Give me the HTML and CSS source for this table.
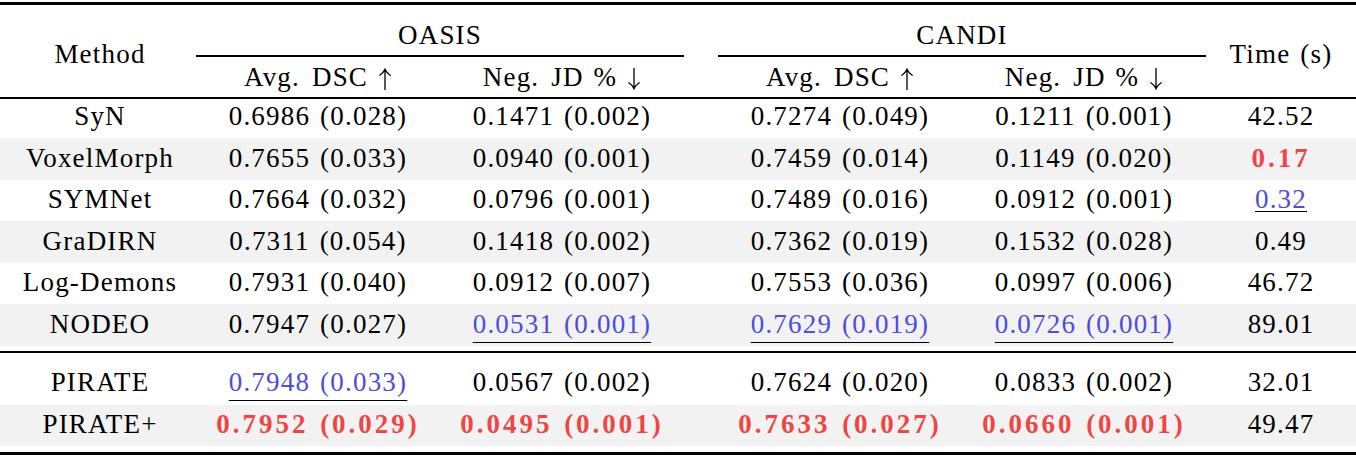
FILE: index.html
```html
<!DOCTYPE html>
<html lang="en">
<head>
<meta charset="utf-8">
<title>Registration results</title>
<link rel="stylesheet" href="styles.css">
</head>
<body>
<table class="results">
  <colgroup>
    <col class="c-method">
    <col class="c-metric">
    <col class="c-metric">
    <col class="c-gap">
    <col class="c-metric">
    <col class="c-metric">
    <col class="c-time">
  </colgroup>
  <thead>
    <tr class="h1">
      <th rowspan="2" class="side method">Method</th>
      <th colspan="2" class="group">OASIS</th>
      <th class="gap-top"></th>
      <th colspan="2" class="group">CANDI</th>
      <th rowspan="2" class="side">Time (s)</th>
    </tr>
    <tr class="h2">
      <th><span class="abbr">Avg.</span> DSC <svg class="arrow" viewBox="0 0 14 22" width="14" height="22" aria-label="↑"><path d="M7 1.2V22M1.8 7.2C4 5.8 5.8 4 7 1.2C8.2 4 10 5.8 12.2 7.2"/></svg></th>
      <th><span class="abbr">Neg.</span> JD % <svg class="arrow" viewBox="0 0 14 22" width="14" height="22" aria-label="↓"><path d="M7 0V20.8M1.8 14.8C4 16.2 5.8 18 7 20.8C8.2 18 10 16.2 12.2 14.8"/></svg></th>
      <th></th>
      <th><span class="abbr">Avg.</span> DSC <svg class="arrow" viewBox="0 0 14 22" width="14" height="22" aria-label="↑"><path d="M7 1.2V22M1.8 7.2C4 5.8 5.8 4 7 1.2C8.2 4 10 5.8 12.2 7.2"/></svg></th>
      <th><span class="abbr">Neg.</span> JD % <svg class="arrow" viewBox="0 0 14 22" width="14" height="22" aria-label="↓"><path d="M7 0V20.8M1.8 14.8C4 16.2 5.8 18 7 20.8C8.2 18 10 16.2 12.2 14.8"/></svg></th>
    </tr>
  </thead>
  <tbody>
    <tr class="first">
      <td class="method">SyN</td>
      <td>0.6986 (0.028)</td>
      <td>0.1471 (0.002)</td>
      <td></td>
      <td>0.7274 (0.049)</td>
      <td>0.1211 (0.001)</td>
      <td>42.52</td>
    </tr>
    <tr class="shade">
      <td class="method">VoxelMorph</td>
      <td>0.7655 (0.033)</td>
      <td>0.0940 (0.001)</td>
      <td></td>
      <td>0.7459 (0.014)</td>
      <td>0.1149 (0.020)</td>
      <td><span class="best">0.17</span></td>
    </tr>
    <tr>
      <td class="method">SYMNet</td>
      <td>0.7664 (0.032)</td>
      <td>0.0796 (0.001)</td>
      <td></td>
      <td>0.7489 (0.016)</td>
      <td>0.0912 (0.001)</td>
      <td><span class="second flat">0.32</span></td>
    </tr>
    <tr class="shade">
      <td class="method">GraDIRN</td>
      <td>0.7311 (0.054)</td>
      <td>0.1418 (0.002)</td>
      <td></td>
      <td>0.7362 (0.019)</td>
      <td>0.1532 (0.028)</td>
      <td>0.49</td>
    </tr>
    <tr>
      <td class="method">Log-Demons</td>
      <td>0.7931 (0.040)</td>
      <td>0.0912 (0.007)</td>
      <td></td>
      <td>0.7553 (0.036)</td>
      <td>0.0997 (0.006)</td>
      <td>46.72</td>
    </tr>
    <tr class="shade before-rule">
      <td class="method">NODEO</td>
      <td>0.7947 (0.027)</td>
      <td><span class="second">0.0531 (0.001)</span></td>
      <td></td>
      <td><span class="second">0.7629 (0.019)</span></td>
      <td><span class="second">0.0726 (0.001)</span></td>
      <td>89.01</td>
    </tr>
    <tr class="after-rule">
      <td class="method">PIRATE</td>
      <td><span class="second">0.7948 (0.033)</span></td>
      <td>0.0567 (0.002)</td>
      <td></td>
      <td>0.7624 (0.020)</td>
      <td>0.0833 (0.002)</td>
      <td>32.01</td>
    </tr>
    <tr class="shade last">
      <td class="method">PIRATE+</td>
      <td><span class="best">0.7952 (0.029)</span></td>
      <td><span class="best">0.0495 (0.001)</span></td>
      <td></td>
      <td><span class="best">0.7633 (0.027)</span></td>
      <td><span class="best">0.0660 (0.001)</span></td>
      <td>49.47</td>
    </tr>
  </tbody>
</table>
</body>
</html>
```

FILE: styles.css
```css
html, body {
  margin: 0;
  padding: 0;
  background: #ffffff;
}

.results {
  margin-top: 2px;
  width: 1356px;
  table-layout: fixed;
  border-collapse: separate;
  border-spacing: 0;
  border-top: 3px solid #000;
  border-bottom: 3px solid #000;
  font-family: "Liberation Serif", "DejaVu Serif", serif;
  font-size: 27px;
  line-height: 27px;
  letter-spacing: 1.2px;
  word-spacing: 2px;
  color: #000;
}

.c-method { width: 196px; }
.c-metric { width: 244px; }
.c-gap { width: 34px; }
.c-time { width: 150px; }

.results th,
.results td {
  padding: 0;
  text-align: center;
  font-weight: normal;
  white-space: nowrap;
}

.h1 .group {
  padding-top: 17px;
  padding-bottom: 6px;
  border-bottom: 2px solid #000;
  vertical-align: bottom;
}

.h1 .side {
  padding-top: 6px;
  vertical-align: middle;
  border-bottom: 2px solid #000;
}

.h2 th {
  padding-top: 7px;
  padding-bottom: 6px;
  border-bottom: 2px solid #000;
}

.abbr {
  margin-right: 2px;
}

.arrow {
  display: inline-block;
  vertical-align: -4px;
  fill: none;
  stroke: #000;
  stroke-width: 1.3;
  stroke-linecap: round;
}

.results .method {
  padding-left: 4px;
}

.results tbody td {
  padding-top: 6.5px;
  padding-bottom: 8px;
}

.results tbody tr.first td {
  padding-top: 4px;
}

.shade td {
  background: #f2f2f2;
}

.before-rule td {
  border-bottom: 5px solid #fff;
}

.results tbody tr.after-rule td {
  border-top: 2px solid #000;
  padding-top: 16px;
  padding-bottom: 9px;
}

.last td {
  border-bottom: 6px solid #fff;
}

.best {
  color: #ef4545;
  font-weight: bold;
  letter-spacing: 3px;
}

.second {
  color: #4d4ddc;
  text-decoration: underline;
  text-decoration-color: #000;
  text-decoration-thickness: 1px;
  text-underline-offset: 9px;
}

.second.flat {
  text-underline-offset: 3px;
}
```
